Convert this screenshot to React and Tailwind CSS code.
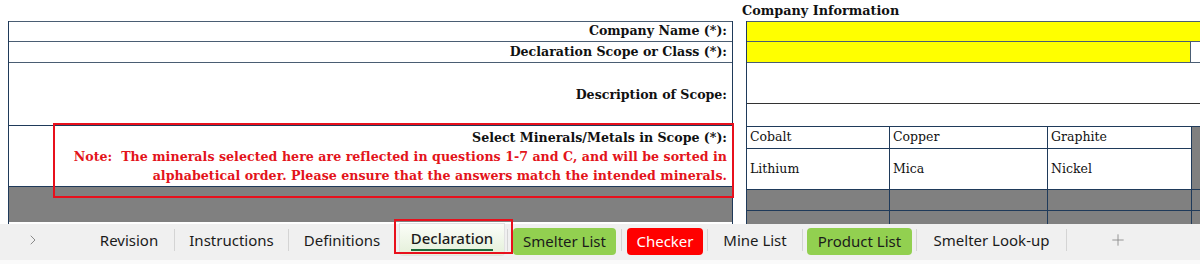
import { ChevronRight, Plus } from 'lucide-react'

const serif = { fontFamily: '"DejaVu Serif", "Liberation Serif", serif' }

const Sep = () => <div className="w-px h-[22px] bg-[#d4d4d4] self-center" />

const MineralCell = ({ children, w, tall }) => (
  <div className={`${w} ${tall ? 'h-[40px] items-center' : 'h-[21px] items-end pb-[1px]'} flex border-r border-[#1f3a5a] pl-[3px] text-[12.5px] text-[#111]`}>
    {children}
  </div>
)

export default function App() {
  return (
    <div className="relative w-[1200px] h-[264px] overflow-hidden bg-white" style={serif}>
      {/* heading */}
      <div className="h-[21px] flex items-center pl-[742px] font-bold text-[12.8px] text-[#111]">
        Company Information
      </div>

      <div className="flex">
        {/* left block */}
        <div className="ml-[8px] w-[725px] border-l border-r border-[#1f3a5a] text-[12.6px] font-bold text-[#111]">
          <div className="h-[21px] border-t border-b border-[#4a5d73] flex items-center justify-end pr-[5px]">Company Name (*):</div>
          <div className="h-[21px] border-b border-[#4a5d73] flex items-center justify-end pr-[5px]">Declaration Scope or Class (*):</div>
          <div className="h-[63px] border-b border-[#1f3a5a] flex items-center justify-end pr-[5px] pt-[2px]">Description of Scope:</div>
          <div className="h-[61px] border-b border-[#1f3a5a] flex flex-col items-end pr-[5px] pt-[2px] leading-[19px]">
            <div>Select Minerals/Metals in Scope (*):</div>
            <div className="text-[#e3141b] tracking-[0.04px]">Note:&nbsp; The minerals selected here are reflected in questions 1-7 and C, and will be sorted in</div>
            <div className="text-[#e3141b] tracking-[0.04px]">alphabetical order. Please ensure that the answers match the intended minerals.</div>
          </div>
          <div className="h-[35px] bg-[#808080]" />
        </div>

        {/* right block */}
        <div className="ml-[13px] flex-1 border-l border-[#1f3a5a]">
          <div className="h-[21px] bg-[#ffff00] border-t border-b border-[#4a5d73]" />
          <div className="h-[21px] flex border-b border-[#4a5d73]">
            <div className="w-[444px] bg-[#ffff00] border-r border-[#4a5d73]" />
            <div className="flex-1 bg-white" />
          </div>
          <div className="h-[63px] flex flex-col">
            <div className="h-[41px] border-b border-[#333]" />
            <div className="flex-1" />
          </div>
          <div className="flex border-t border-[#1f3a5a]">
            <div className="flex flex-col">
              <div className="flex border-b border-[#1f3a5a]">
                <MineralCell w="w-[143px]">Cobalt</MineralCell>
                <MineralCell w="w-[158px]">Copper</MineralCell>
                <MineralCell w="w-[144px]">Graphite</MineralCell>
              </div>
              <div className="flex border-b border-[#1f3a5a]">
                <MineralCell w="w-[143px]" tall>Lithium</MineralCell>
                <MineralCell w="w-[158px]" tall>Mica</MineralCell>
                <MineralCell w="w-[144px]" tall>Nickel</MineralCell>
              </div>
            </div>
            <div className="flex-1 bg-[#808080] border-b border-[#1f3a5a]" />
          </div>
          <div className="flex bg-[#808080]">
            {['w-[143px]', 'w-[158px]', 'w-[144px]'].map((w, i) => (
              <div key={i} className={`${w} border-r border-[#1f3a5a] flex flex-col`}>
                <div className="h-[21px] border-b border-[#1f3a5a]" />
                <div className="h-[13px]" />
              </div>
            ))}
            <div className="flex-1 flex flex-col">
              <div className="h-[21px] border-b border-[#1f3a5a]" />
            </div>
          </div>
        </div>
      </div>

      {/* sheet tabs */}
      <div
        className="h-[36px] bg-[#f0f0f0] flex items-stretch text-[15px] text-[#1b1b1b] pb-[4px]"
        style={{ fontFamily: '"Segoe UI", "Noto Sans", "Open Sans", sans-serif' }}
      >
        <div className="w-[84px] flex items-center pl-[25px] text-[#8a8a8a]">
          <ChevronRight size={16} strokeWidth={1.5} />
        </div>
        <div className="w-[90px] flex items-center justify-center">Revision</div>
        <Sep />
        <div className="w-[113px] flex items-center justify-center">Instructions</div>
        <Sep />
        <div className="w-[106px] flex items-center justify-center">Definitions</div>
        <div className="w-[5px]" />
        <div className="w-[104px] h-[31px] flex flex-col items-center justify-center rounded-b-[3px] bg-gradient-to-b from-[#fbfdf8] to-[#e4f0d9] shadow-[0_0_0_1px_#e2e2e2]">
          <span className="font-medium leading-[18px]">Declaration</span>
          <span className="w-[82px] h-[2px] bg-[#1e6b3a] mt-[2px]" />
        </div>
        <div className="w-[3px]" />
        <Sep />
        <div className="w-[5px]" />
        <div className="w-[103px] mt-[4px] h-[27px] rounded-[4px] bg-[#92d050] flex items-center justify-center">Smelter List</div>
        <div className="w-[5px]" />
        <Sep />
        <div className="w-[5px]" />
        <div className="w-[76px] mt-[4px] h-[27px] rounded-[4px] bg-[#ff0000] text-white flex items-center justify-center">Checker</div>
        <div className="w-[4px]" />
        <Sep />
        <div className="w-[94px] flex items-center justify-center">Mine List</div>
        <Sep />
        <div className="w-[4px]" />
        <div className="w-[105px] mt-[4px] h-[27px] rounded-[4px] bg-[#92d050] flex items-center justify-center">Product List</div>
        <div className="w-[4px]" />
        <Sep />
        <div className="w-[149px] flex items-center justify-center">Smelter Look-up</div>
        <Sep />
        <div className="w-[102px] flex items-center justify-center text-[#8a8a8a]">
          <Plus size={18} strokeWidth={1.2} />
        </div>
      </div>
      <div className="h-[6px] bg-[#fafafa]" />

      {/* annotation boxes */}
      <div className="absolute left-[53px] top-[123px] w-[681px] h-[75px] border-2 border-[#e8101c] pointer-events-none" />
      <div className="absolute left-[394px] top-[219px] w-[119px] h-[35px] border-2 border-[#e8101c] pointer-events-none" />
    </div>
  )
}
